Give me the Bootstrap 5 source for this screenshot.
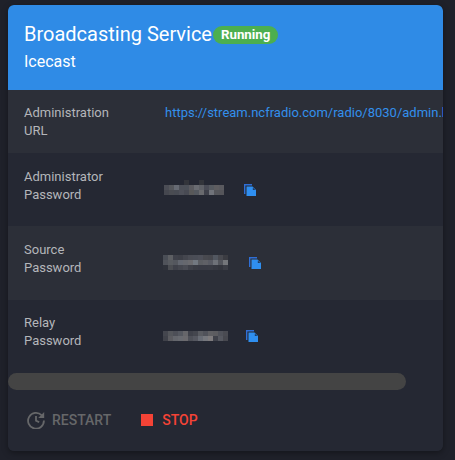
<!DOCTYPE html>
<html lang="en">
<head>
<meta charset="utf-8">
<title>Broadcasting Service</title>
<link href="https://cdn.jsdelivr.net/npm/bootstrap@5.3.0/dist/css/bootstrap.min.css" rel="stylesheet">
<style>
html,body{height:100%;overflow:hidden}
body{background:#1f212a;font-family:Roboto,"Liberation Sans",sans-serif;padding:5px 12px 0 8px}
.svc-card{background:#252833;border:0;border-radius:6px;box-shadow:0 2px 6px rgba(0,0,0,.35);height:446px;overflow:hidden}
.svc-head{background:#2f8be6;color:#fff;height:85px;padding:16px;border:0;border-radius:6px 6px 0 0}
.svc-title{font-size:20px;line-height:26px;font-weight:400;margin:0}
.svc-sub{font-size:16px;line-height:24px;margin:3px 0 0;font-weight:400}
.svc-pill{background:#4caf50;color:#fff;font-size:13.3px;font-weight:700;line-height:18px;height:18px;padding:0 7.5px;border-radius:9px;display:inline-block;vertical-align:2px;margin-left:-3.5px}
.scroll-wrap{overflow:hidden}
.info-table{width:475px;min-width:475px;margin:0;table-layout:fixed;font-size:13px;line-height:18px;--bs-table-bg:transparent;--bs-table-color:#b4b6ba;color:#b4b6ba;border:0}
.info-table td{padding:14px 16px 13px;border:0;box-shadow:none;color:#b4b6ba;background:transparent;vertical-align:top}
.info-table td.lbl{width:141px}
.info-table td.val{padding:0 0 0 16px;white-space:nowrap;vertical-align:middle}
.info-table td.urlv{vertical-align:top;padding-top:14px}
.info-table tr.alt td{background:#2c2f38}
.info-table tr.sec{height:73.33px}
.info-table tr.low td.lbl{padding-top:15px}
.info-table a{color:#3390ec;text-decoration:none}
.secret{display:flex;align-items:center}
.secret svg{display:block;flex:none}
.mos{margin-left:-2px}
.mos-a{margin-left:-1px}
.ic-a{margin-left:20px}
.ic-b{margin-left:19px}
.ic-c{margin-left:18px}
.bar-track{height:17px;background:#252833}
.bar-thumb{width:398px;height:17px;background:#444;border-radius:9px}
.svc-foot{background:#252833;border:0;padding:0 19px;height:61px;display:flex;align-items:center;gap:30px}
.act{display:flex;align-items:center;font-size:14px;font-weight:500;line-height:18px;padding:0;border:0;background:none}
.act-off,.act-off:disabled{color:#666769;gap:7px;opacity:1}
.act-stop{color:#f44336;gap:9px}
.stop-sq{width:12px;height:12px;background:#f44336;display:block}
</style>
</head>
<body>
<div class="card svc-card">
  <div class="card-header svc-head">
    <h2 class="svc-title">Broadcasting Service <span class="svc-pill">Running</span></h2>
    <h3 class="svc-sub">Icecast</h3>
  </div>
  <div class="scroll-wrap">
    <table class="table info-table">
      <tbody>
        <tr class="alt">
          <td class="lbl">Administration<br>URL</td>
          <td class="val urlv"><a href="#">https://stream.ncfradio.com/radio/8030/admin.html</a></td>
        </tr>
        <tr class="sec low">
          <td class="lbl">Administrator<br>Password</td>
          <td class="val"><div class="secret">
            <svg class="mos-a" width="60" height="20" viewBox="0 0 60 20" shape-rendering="crispEdges" aria-hidden="true">
              <rect x="20" y="0" width="5" height="5" fill="#33353b"/><rect x="35" y="0" width="5" height="5" fill="#33353b"/>
              <rect y="5" width="5" height="5" fill="#4b4d55"/><rect x="5" y="5" width="5" height="5" fill="#55575c"/><rect x="10" y="5" width="5" height="5" fill="#666a73"/><rect x="15" y="5" width="5" height="5" fill="#4d5058"/><rect x="20" y="5" width="5" height="5" fill="#4c5058"/><rect x="25" y="5" width="5" height="5" fill="#5b5b60"/><rect x="30" y="5" width="5" height="5" fill="#6a6c72"/><rect x="35" y="5" width="5" height="5" fill="#5f6167"/><rect x="40" y="5" width="5" height="5" fill="#4a4c56"/><rect x="45" y="5" width="5" height="5" fill="#565a60"/><rect x="50" y="5" width="5" height="5" fill="#5e5d60"/><rect x="55" y="5" width="5" height="5" fill="#5a5a5f"/>
              <rect y="10" width="5" height="5" fill="#45474f"/><rect x="5" y="10" width="5" height="5" fill="#4a4c52"/><rect x="10" y="10" width="5" height="5" fill="#484b53"/><rect x="15" y="10" width="5" height="5" fill="#4e5059"/><rect x="20" y="10" width="5" height="5" fill="#484a53"/><rect x="25" y="10" width="5" height="5" fill="#585859"/><rect x="30" y="10" width="5" height="5" fill="#54585f"/><rect x="35" y="10" width="5" height="5" fill="#696a6e"/><rect x="40" y="10" width="5" height="5" fill="#3e404a"/><rect x="45" y="10" width="5" height="5" fill="#70737a"/><rect x="50" y="10" width="5" height="5" fill="#55565b"/><rect x="55" y="10" width="5" height="5" fill="#55555a"/>
            </svg>
            <svg class="ic-a" width="12" height="12" viewBox="0 0 12 12" aria-hidden="true"><path d="M0 0h8v1.4H1.4V10H0z" fill="#2f6fd6"/><path d="M2.5 2.5h6L12 6v6H2.5z" fill="#2f8ff0"/><path d="M8.8 3.4V6h2.6z" fill="#1d3a63"/></svg>
          </div></td>
        </tr>
        <tr class="alt sec low">
          <td class="lbl">Source<br>Password</td>
          <td class="val"><div class="secret">
            <svg class="mos" width="67" height="15" viewBox="0 0 67 15" shape-rendering="crispEdges" aria-hidden="true">
              <rect y="0" width="5" height="5" fill="#4a4e56"/><rect x="5" y="0" width="5" height="5" fill="#5d5f63"/><rect x="10" y="0" width="5" height="5" fill="#3f414a"/><rect x="15" y="0" width="5" height="5" fill="#3d3f47"/><rect x="20" y="0" width="5" height="5" fill="#44464e"/><rect x="25" y="0" width="5" height="5" fill="#4a4c54"/><rect x="30" y="0" width="5" height="5" fill="#4a4d56"/><rect x="35" y="0" width="5" height="5" fill="#4d4f58"/><rect x="40" y="0" width="5" height="5" fill="#48494f"/><rect x="45" y="0" width="5" height="5" fill="#46474d"/><rect x="50" y="0" width="5" height="5" fill="#525760"/><rect x="55" y="0" width="5" height="5" fill="#48494f"/><rect x="60" y="0" width="5" height="5" fill="#3b3c42"/>
              <rect y="5" width="5" height="5" fill="#50535a"/><rect x="5" y="5" width="5" height="5" fill="#585b60"/><rect x="10" y="5" width="5" height="5" fill="#54575e"/><rect x="15" y="5" width="5" height="5" fill="#636770"/><rect x="20" y="5" width="5" height="5" fill="#66686e"/><rect x="25" y="5" width="5" height="5" fill="#6b6b6f"/><rect x="30" y="5" width="5" height="5" fill="#727880"/><rect x="35" y="5" width="5" height="5" fill="#5b5d62"/><rect x="40" y="5" width="5" height="5" fill="#5f6066"/><rect x="45" y="5" width="5" height="5" fill="#585a63"/><rect x="50" y="5" width="5" height="5" fill="#6e7178"/><rect x="55" y="5" width="5" height="5" fill="#53555c"/><rect x="60" y="5" width="5" height="5" fill="#74767a"/>
              <rect y="10" width="5" height="5" fill="#2f323a"/><rect x="5" y="10" width="5" height="5" fill="#4b4d52"/><rect x="10" y="10" width="5" height="5" fill="#3f414a"/><rect x="15" y="10" width="5" height="5" fill="#45474f"/><rect x="20" y="10" width="5" height="5" fill="#4a4c54"/><rect x="25" y="10" width="5" height="5" fill="#3f4149"/><rect x="30" y="10" width="5" height="5" fill="#3a3c44"/><rect x="35" y="10" width="5" height="5" fill="#383a44"/><rect x="40" y="10" width="5" height="5" fill="#383a44"/><rect x="45" y="10" width="5" height="5" fill="#393b44"/><rect x="50" y="10" width="5" height="5" fill="#363841"/><rect x="55" y="10" width="5" height="5" fill="#33353d"/><rect x="60" y="10" width="5" height="5" fill="#3b3d45"/>
            </svg>
            <svg class="ic-b" width="12" height="12" viewBox="0 0 12 12" aria-hidden="true"><path d="M0 0h8v1.4H1.4V10H0z" fill="#2f6fd6"/><path d="M2.5 2.5h6L12 6v6H2.5z" fill="#2f8ff0"/><path d="M8.8 3.4V6h2.6z" fill="#1d3a63"/></svg>
          </div></td>
        </tr>
        <tr class="sec">
          <td class="lbl">Relay<br>Password</td>
          <td class="val"><div class="secret">
            <svg class="mos" width="65" height="10" viewBox="0 0 65 10" shape-rendering="crispEdges" aria-hidden="true">
              <rect y="0" width="5" height="5" fill="#44464e"/><rect x="5" y="0" width="5" height="5" fill="#54565b"/><rect x="10" y="0" width="5" height="5" fill="#4d4f57"/><rect x="15" y="0" width="5" height="5" fill="#555860"/><rect x="20" y="0" width="5" height="5" fill="#66666a"/><rect x="25" y="0" width="5" height="5" fill="#3f414a"/><rect x="30" y="0" width="5" height="5" fill="#44464e"/><rect x="35" y="0" width="5" height="5" fill="#595b61"/><rect x="40" y="0" width="5" height="5" fill="#50525a"/><rect x="45" y="0" width="5" height="5" fill="#5f5f63"/><rect x="50" y="0" width="5" height="5" fill="#5c5c60"/><rect x="55" y="0" width="5" height="5" fill="#50525a"/><rect x="60" y="0" width="5" height="5" fill="#4a4b52"/>
              <rect y="5" width="5" height="5" fill="#40424a"/><rect x="5" y="5" width="5" height="5" fill="#5b5b60"/><rect x="10" y="5" width="5" height="5" fill="#64666c"/><rect x="15" y="5" width="5" height="5" fill="#686a70"/><rect x="20" y="5" width="5" height="5" fill="#6b6a6e"/><rect x="25" y="5" width="5" height="5" fill="#4e5058"/><rect x="30" y="5" width="5" height="5" fill="#555760"/><rect x="35" y="5" width="5" height="5" fill="#686c75"/><rect x="40" y="5" width="5" height="5" fill="#75777d"/><rect x="45" y="5" width="5" height="5" fill="#7e7b7d"/><rect x="50" y="5" width="5" height="5" fill="#3f414a"/><rect x="55" y="5" width="5" height="5" fill="#565860"/><rect x="60" y="5" width="5" height="5" fill="#47484f"/>
            </svg>
            <svg class="ic-c" width="12" height="12" viewBox="0 0 12 12" aria-hidden="true"><path d="M0 0h8v1.4H1.4V10H0z" fill="#2f6fd6"/><path d="M2.5 2.5h6L12 6v6H2.5z" fill="#2f8ff0"/><path d="M8.8 3.4V6h2.6z" fill="#1d3a63"/></svg>
          </div></td>
        </tr>
      </tbody>
    </table>
  </div>
  <div class="bar-track"><div class="bar-thumb"></div></div>
  <div class="card-footer svc-foot">
    <button type="button" class="btn act act-off" disabled>
      <svg width="18" height="18" viewBox="0 0 18 18" fill="none" stroke="#666769" stroke-width="1.8" aria-hidden="true"><path d="M14.6 4.2A7.9 7.9 0 1 0 16.9 9.6"/><path d="M17.2 1v6h-6z" fill="#666769" stroke="none"/><path d="M9 5v4.6l3.2 1.7"/></svg>
      RESTART
    </button>
    <button type="button" class="btn act act-stop">
      <span class="stop-sq"></span>
      STOP
    </button>
  </div>
</div>
<script src="https://cdn.jsdelivr.net/npm/bootstrap@5.3.0/dist/js/bootstrap.bundle.min.js"></script>
</body>
</html>
